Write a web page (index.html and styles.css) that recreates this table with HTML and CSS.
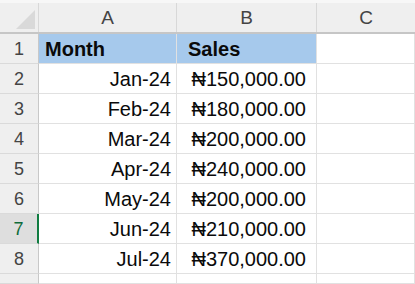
FILE: index.html
```html
<!DOCTYPE html>
<html>
<head>
<meta charset="utf-8">
<link rel="stylesheet" href="styles.css">
</head>
<body>
<div class="sheet">
  <div class="row head">
    <div class="corner"><span class="tri"></span></div>
    <div class="ch">A</div>
    <div class="ch">B</div>
    <div class="ch last">C</div>
  </div>
  <div class="row">
    <div class="rh">1</div>
    <div class="c fill bold left">Month</div>
    <div class="c fill bold left b">Sales</div>
    <div class="c"></div>
  </div>
  <div class="row">
    <div class="rh">2</div>
    <div class="c">Jan-24</div>
    <div class="c b">₦150,000.00</div>
    <div class="c"></div>
  </div>
  <div class="row">
    <div class="rh">3</div>
    <div class="c">Feb-24</div>
    <div class="c b">₦180,000.00</div>
    <div class="c"></div>
  </div>
  <div class="row">
    <div class="rh">4</div>
    <div class="c">Mar-24</div>
    <div class="c b">₦200,000.00</div>
    <div class="c"></div>
  </div>
  <div class="row">
    <div class="rh">5</div>
    <div class="c">Apr-24</div>
    <div class="c b">₦240,000.00</div>
    <div class="c"></div>
  </div>
  <div class="row">
    <div class="rh">6</div>
    <div class="c">May-24</div>
    <div class="c b">₦200,000.00</div>
    <div class="c"></div>
  </div>
  <div class="row">
    <div class="rh sel">7</div>
    <div class="c">Jun-24</div>
    <div class="c b">₦210,000.00</div>
    <div class="c"></div>
  </div>
  <div class="row">
    <div class="rh">8</div>
    <div class="c">Jul-24</div>
    <div class="c b">₦370,000.00</div>
    <div class="c"></div>
  </div>
  <div class="row short">
    <div class="rh"></div>
    <div class="c"></div>
    <div class="c b"></div>
    <div class="c"></div>
  </div>
</div>
</body>
</html>
```
FILE: styles.css
```css
html, body {
  margin: 0;
  padding: 0;
  background: #ffffff;
}
body {
  width: 415px;
  height: 284px;
  overflow: hidden;
  font-family: "Liberation Sans", Arial, sans-serif;
  color: #0a0a0a;
}
.sheet {
  display: flex;
  flex-direction: column;
  width: 415px;
  height: 284px;
  overflow: hidden;
}
.row {
  display: grid;
  grid-template-columns: 39px 138px 140px 1fr;
  height: 30px;
  flex: none;
}
.row.short {
  height: 10px;
}
.row.head {
  height: 34px;
  background: #efefef;
  border-top: 3px solid #f7f7f7;
  border-bottom: 2px solid #c6c6c6;
  box-sizing: border-box;
}
.corner {
  position: relative;
  border-right: 1px solid #d8d8d8;
}
.tri {
  position: absolute;
  right: 3px;
  bottom: 3px;
  width: 0;
  height: 0;
  border-left: 19px solid transparent;
  border-bottom: 19px solid #d9d9d9;
}
.ch {
  border-right: 1px solid #d8d8d8;
  text-align: center;
  font-size: 19px;
  line-height: 29px;
  color: #444;
}
.ch.last { border-right: none; }
.rh {
  background: #efefef;
  border-right: 1px solid #c8c8c8;
  border-bottom: 1px solid #dadada;
  text-align: center;
  font-size: 18px;
  line-height: 27px;
  padding-top: 2px;
  color: #444;
  box-sizing: border-box;
}
.rh.sel {
  background: #dedede;
  color: #0e6b3a;
  border-right: 2px solid #107c41;
}
.c {
  border-right: 1px solid #e1e1e1;
  border-bottom: 1px solid #e1e1e1;
  box-sizing: border-box;
  font-size: 20px;
  line-height: 27px;
  padding: 2px 5px 0 6px;
  text-align: right;
  white-space: nowrap;
  overflow: hidden;
}
.c.b { padding-right: 10px; }
.c.fill { background: #a6c9ec; }
.c.bold { font-weight: bold; }
.c.left { text-align: left; }
.c.left.b { padding-left: 11px; }
```
